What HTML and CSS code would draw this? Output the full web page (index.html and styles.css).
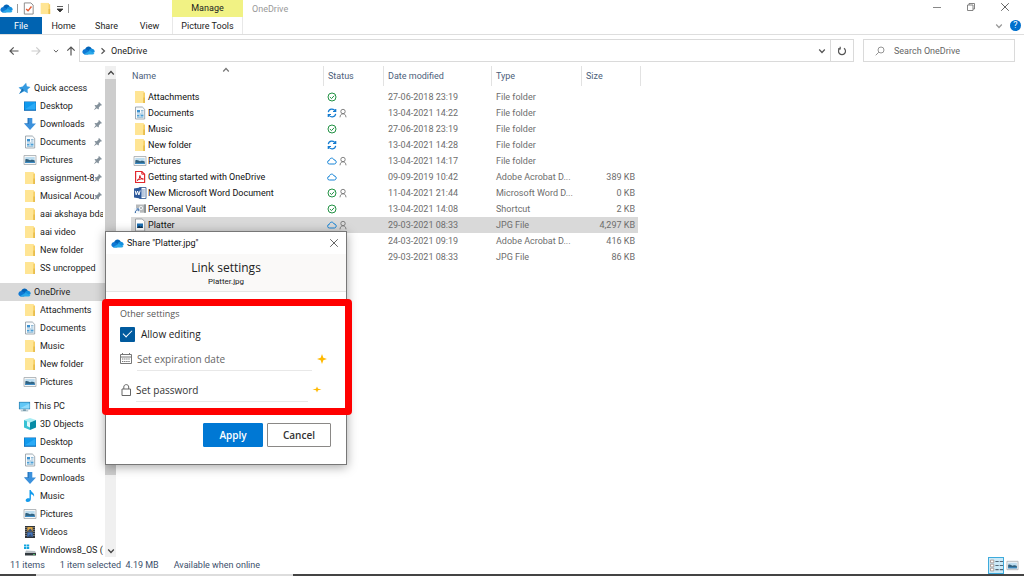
FILE: index.html
```html
<!DOCTYPE html>
<html lang="en">
<head>
	<meta charset="UTF-8">
	<meta name="viewport" content="width=device-width, initial-scale=1.0">
	<title>OneDrive</title>
	<link rel="stylesheet" href="styles.css">
</head>
<body>
	<!-- icon set -->
	<svg class="sprite" aria-hidden="true">
		<symbol id="cloud-app" viewBox="0 0 14 10">
			<path d="M3.2 4C4 1.6 6 .4 8 .9c1.3.3 2.1 1.200 2.600 2.300L7 6z" fill="#0364b8"/>
			<path d="M3.200 9.300a2.900 2.900 0 1 1 1.900-5.200L9 6.500 6.500 9.300z" fill="#0f78d4"/>
			<path d="M7 5.500c.8-1.500 2-2.400 3.600-2.300C12.500 3.400 13.800 4.700 13.700 6.500L11 8.300z" fill="#1490df"/>
			<path d="M2 9.100 8.300 5.200l5.100 2.900c-.5.8-1.200 1.200-2.200 1.200H3.200z" fill="#28a8ea"/>
		</symbol>
		<symbol id="folder" viewBox="0 0 12 14">
			<path d="M1 1h8.500v1.500H11V13H1z" fill="#f6cf63"/>
			<path d="M1 1h8.300v12H1z" fill="#ffe594"/>
			<path d="M9.300 7.500V13H11V7.500z" fill="#e9bd4c"/>
		</symbol>
		<symbol id="doc" viewBox="0 0 12 14">
			<path d="M1.500 1h6.800l2.400 2.300V13H1.500z" fill="#f8fbfd" stroke="#8c979f" stroke-width=".8"/>
			<path d="M3 4h3v2.500H3z" fill="#3c91cf"/>
			<path d="M7 4.500h2.500M7 6h2.500M3 8h6.500M3 11.300h6.500" stroke="#75a9cc" stroke-width=".8"/>
			<path d="M3 9h2.500v1.500H3zM6.500 8.800h3v1.700h-3z" fill="#4b9fd7"/>
		</symbol>
		<symbol id="picture" viewBox="0 0 14 12">
			<path d="M1 1.500h12v9H1z" fill="#f7f7f7" stroke="#a3a9ad" stroke-width=".8"/>
			<path d="M2.300 3h9.400v6H2.300z" fill="#bcdcef"/>
			<path d="M2.300 5.500c2-1.500 3.500.8 5 .7 1.500-.5 3-.5 4.400.3V9H2.300z" fill="#32617e"/>
			<path d="M2.300 7.800h9.400V9H2.300z" fill="#3b8bc5"/>
		</symbol>
		<symbol id="desktop" viewBox="0 0 14 12">
			<path d="M1 1.500h12v9.300H1z" fill="#0a68b5"/>
			<path d="M1.500 2h11v7.500h-11z" fill="#119aed"/>
			<path d="m1.500 9.500 11-7v7z" fill="#2baaf6"/>
		</symbol>
		<symbol id="download" viewBox="0 0 14 14">
			<path d="M4.700 1h4.600v5.500H13L7 13 1 6.500h3.700z" fill="#3c91dc"/>
			<path d="M4.700 1h1v6H2l-1-.5h3.700z" fill="#206fb6"/>
		</symbol>
		<symbol id="star" viewBox="0 0 12 12">
			<path d="m7.500.8.7 3.200 3.300.7-2.700 2.200.2 3.400-3.200-1.700L1 11l2.300-3.500L.5 5l3.800-.8z" fill="#359be1"/>
			<path d="m1 11 3-5 1.500 1.500z" fill="#1a6fb0"/>
		</symbol>
		<symbol id="pin" viewBox="0 0 10 10">
			<path d="m6 1 3 3-.8.6-.7-.2-1.700 2 .1 1.400-.7.700L3.900 7.200.8 9.300 2.900 6.100 1.500 4.800l.7-.7 1.500.1 1.900-1.700-.2-.8z" fill="#84919b"/>
		</symbol>
		<symbol id="pc" viewBox="0 0 14 12">
			<path d="M1 1h12v8H1z" fill="#2478aa"/>
			<path d="M1.700 1.700h10.600v6.500H1.700z" fill="#61c7f6"/>
			<path d="m1.700 8.200 10.600-5.500v5.500z" fill="#91dbfc"/>
			<path d="M5.500 9h3v1.200H11v.9H3v-.9h2.500z" fill="#779aab"/>
		</symbol>
		<symbol id="cube" viewBox="0 0 14 14">
			<path d="m1 3 6-2 6 2-6 2.500z" fill="#a8edf4"/>
			<path d="m1 3 6 2.500V13l-6-2.500z" fill="#36c1d4"/>
			<path d="M13 3 7 5.500V13l6-2.500z" fill="#078ba6"/>
			<path d="m4 4.300 3 1.200v5L4 9z" fill="#dff9fa"/>
		</symbol>
		<symbol id="music" viewBox="0 0 12 14">
			<path d="M5.500 1h1.300c.3 2.300 4.200 3 3.200 6.800-.4-1.600-1.600-2.300-3.100-2.500V10c0 2-1.500 3-3.200 3C2.200 13 1.500 12.100 1.700 11c.3-1.300 2-2 3.800-1.600z" fill="#139bed"/>
		</symbol>
		<symbol id="video" viewBox="0 0 12 14">
			<path d="M1 1h10v12H1z" fill="#303438"/>
			<path d="M3.300 2h5.400v4.500H3.300z" fill="#d8a548"/>
			<path d="M3.300 7.300h5.400V12H3.300z" fill="#4777be"/>
			<path d="m3.300 6.500 3-3 2.400 3zM3.300 12l3-3 2.400 3z" fill="#344f75"/>
			<path d="M2 2v10M10 2v10" stroke="#d4d8db" stroke-width=".8" stroke-dasharray="1 1"/>
		</symbol>
		<symbol id="drive" viewBox="0 0 14 14">
			<path d="M1 1.500h2.300v2H1zM3.800 1.500h2.400v2H3.800zM1 4h2.300v2H1zM3.800 4h2.400v2H3.800z" fill="#12a5df"/>
			<path d="m3 7.500 9 .5 1.200 2H2z" fill="#bac0c5"/>
			<path d="M2 10h11v2.500H2z" fill="#333a3f"/>
			<path d="M10 11h2v.8h-2z" fill="#59dc77"/>
		</symbol>
		<symbol id="pdf" viewBox="0 0 12 14">
			<path d="M1.600 1.500h6.200l2.800 2.700v8.300h-9z" fill="#fff" stroke="#e1282d" stroke-width="1.200"/>
			<path d="M7.800 1.500v2.700h2.800" fill="none" stroke="#e1282d"/>
			<path d="M3 10.500c1.600-.4 3-3.200 2.900-5 .3 2.500 1.600 3.500 3.500 3.500-2.300-.4-4.600.2-6.400 1.500z" fill="none" stroke="#d71920"/>
		</symbol>
		<symbol id="word" viewBox="0 0 14 14">
			<path d="M6.500 1.500H13v11H6.500z" fill="#fff" stroke="#45679c" stroke-width=".9"/>
			<path d="M8.500 4h3.300M8.500 6h3.300M8.500 8h3.300M8.500 10h3.300" stroke="#6283b6" stroke-width=".9"/>
			<path d="m1 2.500 7.500-1.300v11.600L1 11.500z" fill="#2b579a"/>
			<path d="m2.200 4.800 1 4L4.600 5l1.300 4 1.300-4.500" fill="none" stroke="#fff"/>
		</symbol>
		<symbol id="vault" viewBox="0 0 14 12">
			<path d="M3 1.500h10v8.200H3z" fill="#b6b9bb"/>
			<path d="M11 1.500h2v8.200h-2z" fill="#8e9396"/>
			<circle cx="8" cy="5" r="1.700" fill="none" stroke="#edf0f1"/>
			<path d="M1 5h6v6H1z" fill="#f4f8fb"/>
			<path d="M2.300 10C2.300 8 3 7 4.800 6.900M3.500 5.900h2.300v2.300" fill="none" stroke="#285da0"/>
		</symbol>
		<symbol id="jpg" viewBox="0 0 12 14">
			<path d="M1.500 1h6.700l2.500 2.500V13H1.500z" fill="#fff" stroke="#8c9194" stroke-width=".8"/>
			<path d="M3 5.500h6V10H3z" fill="#1c6eb1"/>
			<path d="m3 10 2-2.500L6.500 9l1-1L9 10z" fill="#15334c"/>
		</symbol>
		<symbol id="ok" viewBox="0 0 10 10">
			<circle cx="5" cy="5" r="4" fill="none" stroke="#239245"/>
			<path d="m2.900 5 1.600 1.600L7.200 3.700" fill="none" stroke="#239245"/>
		</symbol>
		<symbol id="sync" viewBox="0 0 10 10">
			<path d="M1.300 4.200C2 .6 6.500.2 8.300 3M8.700 5.800C8 9.400 3.500 9.800 1.700 7M8.700.9v2.600H6M1.300 9.100V6.500H4" fill="none" stroke="#137bd0" stroke-width="1.200"/>
		</symbol>
		<symbol id="cloud" viewBox="0 0 11 10">
			<path d="M2.800 8.300a2 2 0 0 1-.2-4C3 1.300 6.800.900 7.700 3.800c3-.1 3.300 4.300.4 4.500z" fill="none" stroke="#1684d7" stroke-width="1.100"/>
		</symbol>
		<symbol id="person" viewBox="0 0 8 10">
			<circle cx="4" cy="3.500" r="2.200" fill="none" stroke="#767676" stroke-width=".9"/>
			<path d="M1 9.300c.2-2.300 1.200-3.500 3-3.500s2.800 1.200 3 3.500" fill="none" stroke="#767676" stroke-width=".9"/>
		</symbol>
		<symbol id="down" viewBox="0 0 8 8">
			<path d="m1.200 2.500 2.800 3 2.800-3" fill="none" stroke="currentColor" stroke-width="1.200"/>
		</symbol>
		<symbol id="up" viewBox="0 0 8 8">
			<path d="m1.200 5.500 2.800-3 2.800 3" fill="none" stroke="currentColor" stroke-width="1.200"/>
		</symbol>
		<symbol id="arrow" viewBox="0 0 10 10">
			<path d="M9.500 5H1M4.700 1.300 1 5l3.700 3.700" fill="none" stroke="currentColor" stroke-width="1.200"/>
		</symbol>
		<symbol id="close" viewBox="0 0 10 10">
			<path d="m1.200 1.200 7.600 7.600m0-7.600L1.200 8.800" fill="none" stroke="currentColor" stroke-width=".9"/>
		</symbol>
		<symbol id="spark" viewBox="0 0 10 10">
			<path d="m5 0 1.300 3.700L10 5 6.300 6.300 5 10 3.700 6.300 0 5l3.700-1.300z" fill="#ffb900"/>
		</symbol>
	</svg>

	<div class="window">
		<header class="top">
			<div class="top-left">
				<div class="quick-bar">
					<svg class="i13"><use href="#cloud-app"/></svg>
					<span class="line"></span>
					<svg class="i13" viewBox="0 0 14 14"><path d="M2.500 1h7l2.500 2.300V13H2.500z" fill="#fff" stroke="#858585"/><path d="m4.500 7.500 2 2 3.700-4.700" fill="none" stroke="#e45a32" stroke-width="1.500"/></svg>
					<svg class="i13"><use href="#folder"/></svg>
					<svg class="i8" viewBox="0 0 8 8"><path d="M1 1.500h6M1 4h6L4 7z" fill="#333" stroke="#333" stroke-width=".8"/></svg>
					<span class="line"></span>
				</div>
				<nav class="tabs">
					<a href="#" class="tab file">File</a>
					<a href="#" class="tab">Home</a>
					<a href="#" class="tab">Share</a>
					<a href="#" class="tab">View</a>
				</nav>
			</div>
			<div class="manage">
				<span class="manage-title">Manage</span>
				<a href="#" class="manage-tab">Picture Tools</a>
			</div>
			<div class="title">OneDrive</div>
			<div class="top-right">
				<div class="win-btns">
					<button class="icon-btn" aria-label="Minimize"><svg class="i10" viewBox="0 0 10 10"><path d="M1 5.500h8" stroke="#888"/></svg></button>
					<button class="icon-btn" aria-label="Restore"><svg class="i10" viewBox="0 0 10 10"><path d="M1.500 3h5.500v5.500H1.500zM3 3V1.500h5.500V7H7" fill="none" stroke="#777" stroke-width=".9"/></svg></button>
					<button class="icon-btn" aria-label="Close"><svg class="i10"><use href="#close"/></svg></button>
				</div>
				<div class="help-btns">
					<button class="icon-btn expand" aria-label="Expand ribbon"><svg class="i8"><use href="#down"/></svg></button>
					<button class="help" aria-label="Help">?</button>
				</div>
			</div>
		</header>

		<div class="address-bar">
			<div class="arrows">
				<button class="icon-btn" aria-label="Back"><svg class="i10"><use href="#arrow"/></svg></button>
				<button class="icon-btn off" aria-label="Forward"><svg class="i10 right"><use href="#arrow"/></svg></button>
				<button class="icon-btn" aria-label="Recent"><svg class="i6"><use href="#down"/></svg></button>
				<button class="icon-btn" aria-label="Up"><svg class="i10 rise"><use href="#arrow"/></svg></button>
			</div>
			<div class="path">
				<svg class="i13"><use href="#cloud-app"/></svg>
				<svg class="i8 crumb"><use href="#down"/></svg>
				<span class="path-text">OneDrive</span>
				<button class="icon-btn" aria-label="Previous locations"><svg class="i8"><use href="#down"/></svg></button>
				<button class="icon-btn refresh" aria-label="Refresh"><svg class="i10" viewBox="0 0 10 10"><path d="M3 2.300a3.500 3.500 0 1 0 4 0M3.200.700v2.100H1" fill="none" stroke="#555" stroke-width="1.200"/></svg></button>
			</div>
			<label class="search">
				<svg class="i10" viewBox="0 0 10 10"><circle cx="6" cy="4" r="3" fill="none" stroke="#888" stroke-width=".9"/><path d="M3.800 6.200.7 9.300" stroke="#888" stroke-width=".9"/></svg>
				<input type="text" placeholder="Search OneDrive" aria-label="Search OneDrive">
			</label>
		</div>

		<main class="main">
			<nav class="side">
				<ul class="group">
					<li><a href="#" class="item root"><svg class="i13"><use href="#star"/></svg><span>Quick access</span></a></li>
					<li><a href="#" class="item"><svg class="i14"><use href="#desktop"/></svg><span>Desktop</span><svg class="i10"><use href="#pin"/></svg></a></li>
					<li><a href="#" class="item"><svg class="i14"><use href="#download"/></svg><span>Downloads</span><svg class="i10"><use href="#pin"/></svg></a></li>
					<li><a href="#" class="item"><svg class="i14"><use href="#doc"/></svg><span>Documents</span><svg class="i10"><use href="#pin"/></svg></a></li>
					<li><a href="#" class="item"><svg class="i14"><use href="#picture"/></svg><span>Pictures</span><svg class="i10"><use href="#pin"/></svg></a></li>
					<li><a href="#" class="item"><svg class="i14"><use href="#folder"/></svg><span>assignment-8</span><svg class="i10"><use href="#pin"/></svg></a></li>
					<li><a href="#" class="item"><svg class="i14"><use href="#folder"/></svg><span>Musical Acou</span><svg class="i10"><use href="#pin"/></svg></a></li>
					<li><a href="#" class="item"><svg class="i14"><use href="#folder"/></svg><span>aai akshaya bday</span></a></li>
					<li><a href="#" class="item"><svg class="i14"><use href="#folder"/></svg><span>aai video</span></a></li>
					<li><a href="#" class="item"><svg class="i14"><use href="#folder"/></svg><span>New folder</span></a></li>
					<li><a href="#" class="item"><svg class="i14"><use href="#folder"/></svg><span>SS uncropped</span></a></li>
				</ul>
				<ul class="group">
					<li><a href="#" class="item root on"><svg class="i13"><use href="#cloud-app"/></svg><span>OneDrive</span></a></li>
					<li><a href="#" class="item"><svg class="i14"><use href="#folder"/></svg><span>Attachments</span></a></li>
					<li><a href="#" class="item"><svg class="i14"><use href="#doc"/></svg><span>Documents</span></a></li>
					<li><a href="#" class="item"><svg class="i14"><use href="#folder"/></svg><span>Music</span></a></li>
					<li><a href="#" class="item"><svg class="i14"><use href="#folder"/></svg><span>New folder</span></a></li>
					<li><a href="#" class="item"><svg class="i14"><use href="#picture"/></svg><span>Pictures</span></a></li>
				</ul>
				<ul class="group">
					<li><a href="#" class="item root"><svg class="i13"><use href="#pc"/></svg><span>This PC</span></a></li>
					<li><a href="#" class="item"><svg class="i14"><use href="#cube"/></svg><span>3D Objects</span></a></li>
					<li><a href="#" class="item"><svg class="i14"><use href="#desktop"/></svg><span>Desktop</span></a></li>
					<li><a href="#" class="item"><svg class="i14"><use href="#doc"/></svg><span>Documents</span></a></li>
					<li><a href="#" class="item"><svg class="i14"><use href="#download"/></svg><span>Downloads</span></a></li>
					<li><a href="#" class="item"><svg class="i14"><use href="#music"/></svg><span>Music</span></a></li>
					<li><a href="#" class="item"><svg class="i14"><use href="#picture"/></svg><span>Pictures</span></a></li>
					<li><a href="#" class="item"><svg class="i14"><use href="#video"/></svg><span>Videos</span></a></li>
					<li><a href="#" class="item"><svg class="i14"><use href="#drive"/></svg><span>Windows8_OS (C:)</span></a></li>
				</ul>
			</nav>
			<div class="scroll">
				<svg class="i8"><use href="#up"/></svg>
				<div class="track"><div class="thumb"></div></div>
				<svg class="i8"><use href="#down"/></svg>
			</div>

			<div class="files">
				<table class="list">
					<thead>
						<tr>
							<th class="c-name">Name<svg class="i8 sort"><use href="#up"/></svg></th>
							<th class="c-status">Status</th>
							<th class="c-date">Date modified</th>
							<th class="c-type">Type</th>
							<th class="c-size">Size</th>
						</tr>
					</thead>
					<tbody>
						<tr><td><div class="name"><svg class="i14"><use href="#folder"/></svg>Attachments</div></td><td><div class="status"><svg class="i10"><use href="#ok"/></svg></div></td><td>27-06-2018 23:19</td><td>File folder</td><td></td></tr>
						<tr><td><div class="name"><svg class="i14"><use href="#doc"/></svg>Documents</div></td><td><div class="status"><svg class="i10"><use href="#sync"/></svg><svg class="i10"><use href="#person"/></svg></div></td><td>13-04-2021 14:22</td><td>File folder</td><td></td></tr>
						<tr><td><div class="name"><svg class="i14"><use href="#folder"/></svg>Music</div></td><td><div class="status"><svg class="i10"><use href="#ok"/></svg></div></td><td>27-06-2018 23:19</td><td>File folder</td><td></td></tr>
						<tr><td><div class="name"><svg class="i14"><use href="#folder"/></svg>New folder</div></td><td><div class="status"><svg class="i10"><use href="#sync"/></svg></div></td><td>13-04-2021 14:28</td><td>File folder</td><td></td></tr>
						<tr><td><div class="name"><svg class="i14"><use href="#picture"/></svg>Pictures</div></td><td><div class="status"><svg class="i10"><use href="#cloud"/></svg><svg class="i10"><use href="#person"/></svg></div></td><td>13-04-2021 14:17</td><td>File folder</td><td></td></tr>
						<tr><td><div class="name"><svg class="i14"><use href="#pdf"/></svg>Getting started with OneDrive</div></td><td><div class="status"><svg class="i10"><use href="#cloud"/></svg></div></td><td>09-09-2019 10:42</td><td>Adobe Acrobat D...</td><td>389 KB</td></tr>
						<tr><td><div class="name"><svg class="i14"><use href="#word"/></svg>New Microsoft Word Document</div></td><td><div class="status"><svg class="i10"><use href="#ok"/></svg><svg class="i10"><use href="#person"/></svg></div></td><td>11-04-2021 21:44</td><td>Microsoft Word D...</td><td>0 KB</td></tr>
						<tr><td><div class="name"><svg class="i14"><use href="#vault"/></svg>Personal Vault</div></td><td><div class="status"><svg class="i10"><use href="#ok"/></svg></div></td><td>13-04-2021 14:08</td><td>Shortcut</td><td>2 KB</td></tr>
						<tr class="selected"><td><div class="name"><svg class="i14"><use href="#jpg"/></svg>Platter</div></td><td><div class="status"><svg class="i10"><use href="#cloud"/></svg><svg class="i10"><use href="#person"/></svg></div></td><td>29-03-2021 08:33</td><td>JPG File</td><td>4,297 KB</td></tr>
						<tr><td></td><td></td><td>24-03-2021 09:19</td><td>Adobe Acrobat D...</td><td>416 KB</td></tr>
						<tr><td></td><td></td><td>29-03-2021 08:33</td><td>JPG File</td><td>86 KB</td></tr>
					</tbody>
				</table>
			</div>
		</main>

		<footer class="bottom">
			<span>11 items</span>
			<span>1 item selected&nbsp; 4.19 MB</span>
			<span>Available when online</span>
			<div class="views">
				<button class="view on" aria-label="Details"><svg class="i13" viewBox="0 0 12 12"><path d="M.500 1h3v2.500h-3zM.500 4.800h3v2.500h-3zM.500 8.500h3V11h-3z" fill="#fff" stroke="#a6938d" stroke-width=".8"/><path d="M5 2.300h3M9 2.300h3M5 6h3M9 6h3M5 9.800h3M9 9.800h3" stroke="#536777"/></svg></button>
				<button class="view" aria-label="Large icons"><svg class="i13"><use href="#picture"/></svg></button>
			</div>
		</footer>
		<div class="edge"></div>
	</div>

	<form class="dialog">
		<div class="dialog-bar">
			<svg class="i13"><use href="#cloud-app"/></svg>
			<span>Share "Platter.jpg"</span>
			<button type="button" class="icon-btn" aria-label="Close dialog"><svg class="i10"><use href="#close"/></svg></button>
		</div>
		<div class="dialog-head">
			<h1>Link settings</h1>
			<p>Platter.jpg</p>
		</div>
		<div class="settings">
			<h2>Other settings</h2>
			<div class="check">
				<input type="checkbox" id="edit" checked>
				<label for="edit">Allow editing</label>
			</div>
			<div class="field">
				<label for="expire" aria-label="Expiration date"><svg class="i12" viewBox="0 0 12 12"><path d="M.500 1.500h11v9H.500zM.500 4h11" fill="none" stroke="#777"/><path d="M2.500 0v2M9.500 0v2M2 6h8M2 8.500h8" stroke="#777" stroke-dasharray="1.400 .7"/></svg></label>
				<input type="text" id="expire" placeholder="Set expiration date">
				<svg class="i10"><use href="#spark"/></svg>
			</div>
			<div class="field password">
				<label for="pass" aria-label="Password"><svg class="i12" viewBox="0 0 12 12"><path d="M2 5h8.500v6.500H2zM3.800 5V3c0-3.200 4.900-3.200 4.900 0v2" fill="none" stroke="#666"/></svg></label>
				<input type="password" id="pass" placeholder="Set password">
				<svg class="i10" viewBox="0 0 10 10"><path d="m5 1.500 1 2.200 3.500.8L6 5.300 5 7.500 4 5.300.5 4.500 4 3.700z" fill="#ffb900"/></svg>
			</div>
		</div>
		<div class="actions">
			<button type="submit" class="btn apply">Apply</button>
			<button type="button" class="btn">Cancel</button>
		</div>
	</form>
</body>
</html>
```

FILE: styles.css
```css
* {
	box-sizing: border-box;
}
body {
	margin: 0;
	font-family: Roboto, "Noto Sans", sans-serif;
	font-size: 9px; line-height: 16px;
	color: #222; background-color: white;
}
a {
	color: inherit; text-decoration: none;
}
ul, h1, h2, p {
	margin: 0; padding: 0; list-style: none; font-weight: normal;
}
button, input {
	font: inherit; color: inherit;
}
svg {
	display: block; flex: none;
}
.sprite {
	position: absolute; width: 0; height: 0;
}
.i6 { width: 6px; height: 6px; }
.i8 { width: 8px; height: 8px; }
.i10 { width: 10px; height: 10px; }
.i12 { width: 12px; height: 12px; }
.i13 { width: 13px; height: 13px; }
.i14 { width: 14px; height: 14px; }
.icon-btn {
	display: flex; padding: 0;
	border: 0; background: none; color: #555;
}
.window {
	display: flex; flex-direction: column;
	height: 100vh; overflow: hidden;
}

/* title + ribbon */
.top {
	display: flex; height: 35px; flex: none;
	border-bottom: 1px solid #dedede;
}
.top-left {
	width: 172px;
}
.quick-bar {
	display: flex; align-items: center; gap: 4px;
	height: 17px;
}
.line {
	width: 1px; height: 9px; background-color: #999;
}
.tabs {
	display: flex; height: 17px;
}
.tab {
	width: 43px; line-height: 19px; text-align: center;
}
.file {
	width: 42px; color: white; background-color: #0063b1;
}
.manage {
	width: 71px; text-align: center;
}
.manage-title {
	display: block; height: 17px;
	background-color: #f1f284;
}
.manage-tab {
	display: block; height: 17px; line-height: 19px;
	border: 1px solid #e8e8e8; border-width: 0 1px;
}
.title {
	flex: 1; padding-left: 9px; line-height: 18px; color: #999;
}
.win-btns {
	display: flex; gap: 24px; padding: 2px 14px 0 0;
	height: 17px;
}
.help-btns {
	display: flex; justify-content: flex-end; align-items: center;
	gap: 7px; height: 17px; padding-right: 3px;
}
.expand {
	color: #999;
}
.help {
	width: 11px; height: 11px; padding: 0;
	border: 0; border-radius: 50%;
	line-height: 11px; color: white; background-color: #0070cd;
}

/* address */
.address-bar {
	display: flex; align-items: center; flex: none;
	height: 31px; padding-right: 9px;
}
.arrows {
	display: flex; align-items: center; gap: 12px;
	width: 79px; padding-left: 9px;
}
.arrows .icon-btn + .icon-btn + .icon-btn {
	margin-right: -5px;
}
.off {
	color: #ccc;
}
.right {
	transform: rotate(180deg);
}
.rise {
	transform: rotate(90deg);
}
.crumb {
	color: #555;
	transform: rotate(-90deg);
}
.path {
	display: flex; align-items: center; flex: 1; gap: 4px;
	height: 23px; padding-left: 2px;
	border: 1px solid #dadada;
}
.path-text {
	flex: 1;
}
.refresh {
	align-self: stretch; align-items: center; justify-content: center;
	width: 23px; border-left: 1px solid #dadada;
}
.search {
	display: flex; align-items: center; gap: 9px;
	width: 152px; height: 23px; margin-left: 9px; padding-left: 11px;
	border: 1px solid #dadada;
}
.search input {
	flex: 1; min-width: 0; padding: 0;
	border: 0; outline: 0;
}
.search input::placeholder {
	color: #666;
}

/* body */
.main {
	display: flex; flex: 1; min-height: 0;
}
.side {
	width: 105px; padding-top: 13px; overflow: hidden;
}
.group {
	margin-bottom: 6px;
}
.item {
	display: flex; align-items: center; gap: 3px;
	height: 18px; padding: 0 2px 0 23px;
	white-space: nowrap;
}
.item span {
	flex: 1; min-width: 0; overflow: hidden;
}
.item .i10 {
	margin-left: -4px;
}
.root {
	padding-left: 18px;
}
.on {
	background-color: #d9d9d9;
}
.scroll {
	display: flex; flex-direction: column; align-items: center;
	width: 11px; padding: 3px 0 2px;
	color: #444; background-color: #f0f0f0;
}
.track {
	flex: 1; align-self: stretch; padding: 2px 0;
}
.thumb {
	height: 85%; background-color: #cdcdcd;
}
.files {
	flex: 1; padding-left: 15px;
}
.list {
	table-layout: fixed; width: 510px;
	border-spacing: 0; white-space: nowrap;
}
.list th {
	height: 20px; padding: 0 0 0 4px;
	border-right: 1px solid #e2e2e2;
	font-weight: normal; text-align: left; color: #4c607a;
}
.list .c-name {
	position: relative; width: 193px; padding-left: 1px;
}
.sort {
	position: absolute; top: 0; left: 91px; color: #777;
}
.c-status { width: 60px; }
.c-date { width: 108px; }
.c-type { width: 90px; }
.c-size { width: 59px; }
.list td {
	height: 16px; padding: 0 0 0 4px; color: #6d6d6d;
}
.list td:first-child {
	padding-left: 2px; color: #111;
}
.list td:nth-child(2) {
	padding-left: 3px;
}
.list td:last-child {
	padding-right: 3px; text-align: right;
	border-right: 3px solid white;
}
.list tbody tr:first-child td {
	height: 19px; padding-top: 3px;
}
.name {
	display: flex; align-items: center; gap: 1px;
}
.status {
	display: flex; align-items: center; gap: 1px;
}
.selected td {
	background-color: #d9d9d9;
	background-clip: padding-box;
}

/* status bar */
.bottom {
	display: flex; align-items: center; gap: 15px; flex: none;
	height: 17px; padding-left: 10px;
	line-height: 17px; color: #3c4f6b;
}
.views {
	display: flex; align-self: stretch; margin-left: auto; padding-right: 4px;
}
.view {
	display: flex; align-items: center; justify-content: center;
	width: 16px; padding: 0; border: 0; background: none;
}
.view.on {
	border: 1px solid #3eabdc; background-color: #cbe9f7;
}
.edge {
	flex: none; height: 2px;
	background: linear-gradient(to right, #444 36px, #ddd 36px, #ddd 293px, #444 293px);
}

/* share dialog */
.dialog {
	position: absolute; top: 231px; left: 105px;
	width: 242px; padding-bottom: 17px;
	border: 1px solid #777; background-color: white;
	box-shadow: 0 2px 10px rgba(0, 0, 0, .35);
}
.dialog-bar {
	display: flex; align-items: center; gap: 3px;
	height: 22px; padding: 0 7px 0 5px; color: #111;
}
.dialog-bar span {
	flex: 1;
}
.dialog-head {
	height: 38px; padding-top: 6px;
	border-bottom: 1px solid #e5e5e5;
	text-align: center; background-color: #faf9f8;
}
.dialog-head h1 {
	font-family: "Open Sans", sans-serif;
	font-size: 12px; line-height: 16px;
}
.dialog-head p {
	font-size: 8px; line-height: 11px;
}
.settings {
	margin: 7px -6px 0 -4px; padding: 0 18px 6px 11px;
	border: 7px solid red; border-radius: 4px;
	font-family: "Open Sans", sans-serif;
	font-size: 10px;
}
.settings h2 {
	font-size: 9px; line-height: 15px; color: #555;
}
.check {
	display: flex; align-items: center; gap: 6px;
	height: 26px;
}
.check input {
	display: flex; align-items: center; justify-content: center;
	appearance: none; width: 15px; height: 15px; margin: 0;
	border-radius: 1px; background-color: #005a9e;
}
.check input:checked::after {
	content: "";
	width: 8px; height: 4px; margin-bottom: 3px;
	border: 1px solid white; border-width: 0 0 1px 1px;
	transform: rotate(-45deg);
}
.field {
	display: flex; align-items: center; gap: 5px;
	height: 24px;
}
.field input {
	flex: 1; min-width: 0; height: 24px; padding: 0;
	border: 0; border-bottom: 1px solid #e8e8e8; outline: 0;
	background: none;
}
.field input::placeholder {
	color: #666;
}
.password {
	margin-top: 7px; padding-right: 5px; gap: 4px;
}
.password input::placeholder {
	color: #333;
}
.actions {
	display: flex; justify-content: flex-end; gap: 4px;
	padding: 8px 15px 0 0;
}
.btn {
	width: 64px; height: 24px; padding: 0;
	border: 1px solid #8a8886; border-radius: 1px;
	font-family: "Open Sans", sans-serif;
	font-size: 10px; font-weight: 600; color: #333; background-color: white;
}
.apply {
	width: 60px; border-color: #0078d4;
	color: white; background-color: #0078d4;
}
```
